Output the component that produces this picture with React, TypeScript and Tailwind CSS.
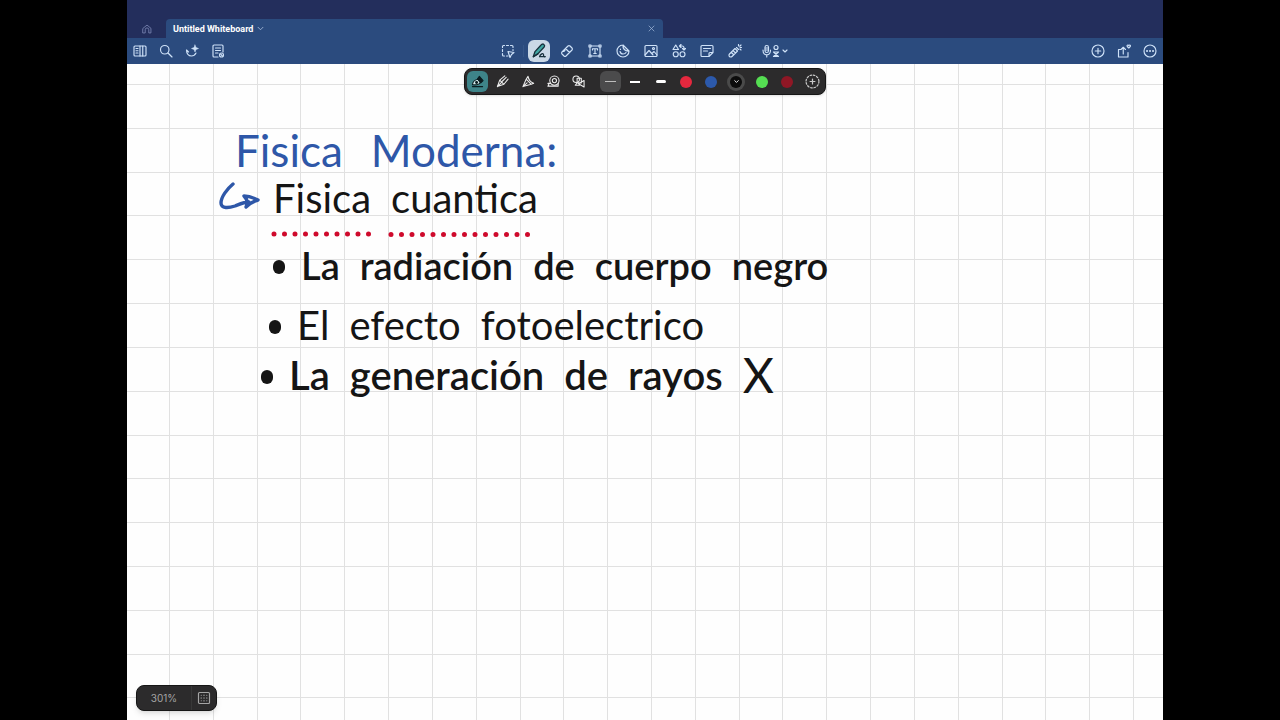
import { useState } from "react";
import type { ReactNode } from "react";
import clsx from "clsx";

const GRID_STEP = 43.82;
const GRID_LINES = Array.from({ length: 80 }, (_, i) => i);

interface IconProps {
  children: ReactNode;
  className?: string;
  viewBox?: string;
}

function Icon({ children, className = "size-[14px]", viewBox = "0 0 28 28" }: IconProps) {
  return (
    <svg
      className={className}
      viewBox={viewBox}
      fill="none"
      stroke="currentColor"
      strokeWidth={2.3}
      strokeLinecap="round"
      strokeLinejoin="round"
      aria-hidden="true"
    >
      {children}
    </svg>
  );
}

const LEFT_TOOLS = [
  {
    label: "Sidebar",
    icon: (
      <>
        <rect x="2" y="4" width="24" height="20" rx="2" />
        <path d="M14 4v20M19.500 4v20M6 9h4M6 13.500h4M6 18h4" />
      </>
    ),
  },
  {
    label: "Search",
    icon: (
      <>
        <circle cx="11.500" cy="11.500" r="8.500" />
        <path d="M18 18l8 8" />
      </>
    ),
  },
  {
    label: "AI ink",
    icon: (
      <>
        <path d="M3 12c0 7 4 12 10 12 4 0 7-2 9-6M3 12l4 4" />
        <path
          d="M20 2l2 5 5 2-5 2-2 5-2-5-5-2 5-2z"
          fill="currentColor"
          strokeWidth={1}
        />
      </>
    ),
  },
  {
    label: "Page settings",
    icon: (
      <>
        <path d="M14 26H6a2 2 0 0 1-2-2V4a2 2 0 0 1 2-2h16a2 2 0 0 1 2 2v12M9 8h10M9 13h10M9 18h5" />
        <circle cx="21" cy="22" r="4" />
        <path d="M19.500 20.500l3 3" />
      </>
    ),
  },
];

const CENTER_TOOLS = [
  {
    label: "Eraser",
    icon: (
      <path d="M4 16L16 4a3 3 0 0 1 4 0l4 4a3 3 0 0 1 0 4L12 24a3 3 0 0 1-4 0l-4-4a3 3 0 0 1 0-4zM11 9l8 8M7.500 15l2.500-2.500" />
    ),
  },
  {
    label: "Text",
    icon: (
      <>
        <path d="M4 6v16M24 6v16M6 4h16M6 24h16M9 12V9.500h10V12M14 9.500V19M11.500 19h5" />
        <path d="M2 2h4v4H2zM22 2h4v4h-4zM2 22h4v4H2zM22 22h4v4h-4z" />
      </>
    ),
  },
  {
    label: "Stickers",
    icon: (
      <path d="M14 2C7 2 2 7.500 2 14s5 12 12 12 12-5.500 12-12L14 2zM14 2c-1 7 4 13 12 12M8 15c1 3.500 3.500 5 6 5s5-1 6-3M9 10v1" />
    ),
  },
  {
    label: "Image",
    icon: (
      <>
        <rect x="2" y="3" width="24" height="22" rx="2" />
        <path d="M2 22l8-9 8 9M16 19l4-4 6 7" />
        <circle cx="19" cy="9" r="2" />
      </>
    ),
  },
  {
    label: "Elements",
    icon: (
      <>
        <path d="M7.500 2L13 11H2zM16 4h4a4 4 0 0 1 4 4v3M18 1l-3 3 3 3M21 9l3 3 3-3" />
        <circle cx="7.500" cy="20.500" r="5" />
        <circle cx="21" cy="20.500" r="5" />
      </>
    ),
  },
  {
    label: "Sticky note",
    icon: (
      <path d="M4 3h20a2 2 0 0 1 2 2v12l-8 8H4a2 2 0 0 1-2-2V5a2 2 0 0 1 2-2zM26 17h-6a2 2 0 0 0-2 2v6M7 9h14M7 14h8" />
    ),
  },
  {
    label: "Laser pointer",
    icon: (
      <>
        <path d="M3 20L14 9l5 5L8 25a3.500 3.500 0 0 1-5 0 3.500 3.500 0 0 1 0-5zM10 13l5 5M8 18l2 2" />
        <path d="M17 7l4 4M21 1v3M26 2l-2.500 2.500M27 7h-3M26 12l-2-2" />
      </>
    ),
  },
];

const RIGHT_TOOLS = [
  {
    label: "Add",
    icon: (
      <>
        <circle cx="14" cy="14" r="12" />
        <path d="M14 8.500v11M8.500 14h11" />
      </>
    ),
  },
  {
    label: "Share",
    icon: (
      <>
        <path d="M7 11H3v15h19v-9M12.500 20V7M8 11l4.500-4.500L17 11" />
        <path d="M20 3.500c1-2 3-2 3.500 0 .5-2 3-2 3.500 0 0 2-2 3-3.500 4.500C22 6.500 20 5.500 20 3.500z" />
      </>
    ),
  },
  {
    label: "More",
    icon: (
      <>
        <circle cx="14" cy="14" r="12" />
        <path d="M8 14h.1M14 14h.1M20 14h.1" strokeWidth={4} />
      </>
    ),
  },
];

const PEN_TOOLS = [
  {
    label: "Fountain pen",
    icon: (
      <>
        <path d="M3 21c1-7 5-11 12-12l5 7c-3 5-8 6-17 5z" fill="#d5eeee" stroke="#0b1c20" />
        <circle cx="12" cy="16" r="2" fill="#0b1c20" stroke="#0b1c20" />
        <path d="M14 8l4-5 8 9-5 5z" fill="#0b1c20" stroke="#0b1c20" />
        <path d="M3 25h22" stroke="#0b1c20" />
      </>
    ),
  },
  {
    label: "Ball pen",
    icon: <path d="M3 25L8 11 19 2M3 25l14-5L26 9M8 11l9 9M3 25l9-9M13 14l9-9" />,
  },
  {
    label: "Brush pen",
    icon: <path d="M2 25L9 9l11 11zM2 25l9-8M9 9l4-6M20 20l5-2M13 3c1 7 5 12 12 15" />,
  },
  {
    label: "Tape",
    icon: (
      <>
        <circle cx="16" cy="12" r="10" />
        <circle cx="16" cy="12" r="4.500" />
        <path d="M24 18v6H2l2-3-2-3h6" />
      </>
    ),
  },
  {
    label: "Shapes",
    icon: (
      <>
        <circle cx="9" cy="9" r="7" />
        <path d="M11 7h9v10h-9zM11 17l-4 5h9M26 12v14l-12-7z" />
      </>
    ),
  },
];

const STROKES = [
  { label: "Thin", bar: "h-px w-[11px] bg-[#bdbdbd]" },
  { label: "Medium", bar: "h-[2px] w-[10px] bg-white" },
  { label: "Thick", bar: "h-[3px] w-[10px] rounded-full bg-white" },
];

const COLORS = [
  { label: "Red", swatch: "bg-[#e5283e]" },
  { label: "Blue", swatch: "bg-[#2c59ab]" },
  { label: "Black", swatch: "bg-[#0c0c0c]" },
  { label: "Green", swatch: "bg-[#55de52]" },
  { label: "Dark red", swatch: "bg-[#8f1725]" },
];

function ToolButton({ label, children }: { label: string; children: ReactNode }) {
  return (
    <button
      type="button"
      aria-label={label}
      className="flex h-6 w-7 items-center justify-center text-[#cfe2f8]"
    >
      {children}
    </button>
  );
}

function TabBar() {
  return (
    <div className="flex h-[38px] items-end bg-[#232e5c]">
      <button
        type="button"
        aria-label="Home"
        className="flex h-[19px] w-[39px] items-center justify-center text-[#7d87b5]"
      >
        <Icon className="size-[10px]">
          <path d="M3 12L14 3l11 9v13h-6v-9a5 5 0 0 0-10 0v9H3z" />
        </Icon>
      </button>
      <div className="flex h-[19px] w-[48%] items-center rounded-t-sm bg-[#2b4b7e] pr-2 pl-[7px]">
        <button
          type="button"
          className="flex items-center gap-1 font-['Roboto',sans-serif] text-[9px] leading-4 font-bold text-white"
        >
          Untitled Whiteboard
          <Icon className="size-[7px] text-[#b5c9e6]">
            <path d="M4 9l10 10L24 9" strokeWidth={3} />
          </Icon>
        </button>
        <button type="button" aria-label="Close tab" className="ml-auto text-[#9db4d6]">
          <Icon className="size-[7px]">
            <path d="M4 4l20 20M24 4L4 24" strokeWidth={3} />
          </Icon>
        </button>
      </div>
    </div>
  );
}

function Toolbar() {
  return (
    <div className="flex h-[26px] items-center bg-[#2b4b7e]">
      <div className="flex flex-1 [&>button]:w-[26px]">
        {LEFT_TOOLS.map((tool) => (
          <ToolButton key={tool.label} label={tool.label}>
            <Icon>{tool.icon}</Icon>
          </ToolButton>
        ))}
      </div>

      <div className="flex items-center">
        <ToolButton label="Lasso">
          <Icon>
            <path d="M3 7V5a2 2 0 0 1 2-2h2M11 3h4M19 3h3a2 2 0 0 1 2 2v2M24 11v2M3 11v4M3 19v3a2 2 0 0 0 2 2h2M11 24h3" />
            <path d="M14 15l12 2-5 4-3 6z" />
          </Icon>
        </ToolButton>
        <div className="mx-px h-3 w-px bg-[#365687]" />
        <button
          type="button"
          aria-label="Pen"
          aria-pressed="true"
          className="mx-[3px] flex size-[22px] items-center justify-center rounded-md bg-[#cad8e6] text-[#17303c]"
        >
          <Icon className="size-4">
            <path d="M4 24l3-9L18 3a3 3 0 0 1 5 4L12 19z" fill="#42a8a5" />
            <path d="M4 24l8-5M15 24c1-4 7-8 7-3 0 3 0 4 3 3M16 24h8" />
          </Icon>
        </button>
        {CENTER_TOOLS.map((tool) => (
          <ToolButton key={tool.label} label={tool.label}>
            <Icon>{tool.icon}</Icon>
          </ToolButton>
        ))}
        <button
          type="button"
          aria-label="Record audio"
          className="ml-1 flex w-11 items-center justify-center text-[#cfe2f8]"
        >
          <Icon className="h-[14px] w-[26px]" viewBox="0 0 52 28">
            <rect x="6" y="3" width="7" height="14" rx="3.500" />
            <path d="M2 12c0 13 15 13 15 0M9.500 22v4M7 8h5M7 12h5" />
            <circle cx="28" cy="7" r="4" />
            <path d="M23 16l10 9M33 16l-10 9M23 16h10M23 25h10" />
            <path d="M42 12l4 4 4-4" />
          </Icon>
        </button>
      </div>

      <div className="flex flex-1 justify-end [&>button]:w-[26px]">
        {RIGHT_TOOLS.map((tool) => (
          <ToolButton key={tool.label} label={tool.label}>
            <Icon>{tool.icon}</Icon>
          </ToolButton>
        ))}
      </div>
    </div>
  );
}

function PenBar() {
  const [pen, setPen] = useState("Fountain pen");
  const [stroke, setStroke] = useState("Thin");
  const [color, setColor] = useState("Black");

  return (
    <div className="absolute top-1 left-1/2 z-10 flex h-[27px] w-[362px] -translate-x-1/2 items-center rounded-lg border border-[#161616] bg-[#2c2b2c] shadow">
      {PEN_TOOLS.map((tool) => (
        <button
          key={tool.label}
          type="button"
          aria-label={tool.label}
          onClick={() => setPen(tool.label)}
          className="flex flex-1 justify-center text-[#ededed]"
        >
          <span
            className={clsx(
              "flex size-[21px] shrink-0 items-center justify-center rounded-md",
              pen === tool.label && "bg-[#3e8489]",
            )}
          >
            <Icon className="size-[13px]">{tool.icon}</Icon>
          </span>
        </button>
      ))}
      <div className="w-[6px]" />
      {STROKES.map((s) => (
        <button
          key={s.label}
          type="button"
          aria-label={s.label}
          onClick={() => setStroke(s.label)}
          className="flex flex-1 justify-center"
        >
          <span
            className={clsx(
              "flex size-[21px] shrink-0 items-center justify-center rounded-md",
              stroke === s.label && "bg-[#4b4b4c]",
            )}
          >
            <span className={s.bar} />
          </span>
        </button>
      ))}
      {COLORS.map((c) => (
        <button
          key={c.label}
          type="button"
          aria-label={c.label}
          onClick={() => setColor(c.label)}
          className="flex flex-1 justify-center text-white"
        >
          <span
            className={clsx(
              "flex size-3 shrink-0 items-center justify-center rounded-full",
              c.swatch,
              color === c.label && "ring-[3px] ring-[#4a4a4a]",
            )}
          >
            {color === c.label && (
              <Icon className="size-[5px]">
                <path d="M4 9l10 10L24 9" strokeWidth={5} />
              </Icon>
            )}
          </span>
        </button>
      ))}
      <button
        type="button"
        aria-label="Add color"
        className="flex flex-1 justify-center text-[#c9c9c9]"
      >
        <Icon className="size-[15px]">
          <circle cx="14" cy="14" r="12" strokeDasharray="3 3.300" />
          <path d="M14 9.500v9M9.500 14h9" />
        </Icon>
      </button>
    </div>
  );
}

function Grid() {
  return (
    <svg className="absolute inset-0 size-full" stroke="#e1e1e1" aria-hidden="true">
      {GRID_LINES.map((i) => {
        const x = Math.round(42 + i * GRID_STEP) + 0.5;
        const y = Math.round(20 + i * GRID_STEP) + 0.5;
        return (
          <g key={i}>
            <line x1={x} y1="0" x2={x} y2="100%" />
            <line x1="0" y1={y} x2="100%" y2={y} />
          </g>
        );
      })}
    </svg>
  );
}

function Bullet() {
  return <span className="mt-1 -mr-1 h-[14px] w-3 shrink-0 rounded-full bg-[#151515]" />;
}

function Notes() {
  return (
    <div className="relative pt-[60px] pl-[92px] font-['Lato',sans-serif] whitespace-nowrap text-[#151515]">
      <h1 className="flex gap-7 pl-4 text-[44px] leading-[52px] text-[#2e57a8]">
        <span>Fisica</span>
        <span>Moderna:</span>
      </h1>
      <h2 className="flex items-center text-[40px] leading-[44px]">
        <svg
          className="mr-3 h-8 w-[42px] shrink-0"
          viewBox="0 0 42 32"
          fill="none"
          stroke="#2e57a8"
          strokeWidth={3.4}
          strokeLinecap="round"
          strokeLinejoin="round"
          aria-hidden="true"
        >
          <path d="M14 2C8 7 2 15 2 21c0 6 8 5 14 3 5-2 9-4 14-4M25 14c5 0 10 2 14 4-4 1-8 3-12 7 2-4 1-8-2-11z" />
        </svg>
        <span>Fisica</span>
        <span className="ml-5">cuantica</span>
      </h2>
      <svg className="ml-[52px] block h-[20px] w-[262px]" viewBox="0 0 262 20" aria-hidden="true">
        <path
          d="M3 14h96M120 14.500h138"
          fill="none"
          stroke="#cf0a2c"
          strokeWidth={5}
          strokeLinecap="round"
          strokeDasharray="0 10.500"
        />
      </svg>
      <ul className="mt-px text-[40px] leading-[48px]">
        <li className="flex items-center gap-5 pl-[54px] text-[38px] leading-[48px] font-semibold">
          <Bullet />
          <span>La</span>
          <span>radiación</span>
          <span>de</span>
          <span>cuerpo</span>
          <span>negro</span>
        </li>
        <li className="mt-3 flex items-center gap-5 pl-[50px]">
          <Bullet />
          <span>El</span>
          <span>efecto</span>
          <span>fotoelectrico</span>
        </li>
        <li className="mt-[2px] flex items-center gap-5 pl-[42px] font-semibold">
          <Bullet />
          <span>La</span>
          <span>generación</span>
          <span>de</span>
          <span>rayos</span>
          <span className="text-[48px] font-normal">X</span>
        </li>
      </ul>
    </div>
  );
}

export default function App() {
  return (
    <div className="flex min-h-screen flex-col bg-black pr-[117px] pl-[127px] font-['Inter',sans-serif]">
      <header>
        <TabBar />
        <Toolbar />
      </header>
      <main className="relative flex flex-1 flex-col overflow-hidden bg-[#fefefe]">
        <Grid />
        <PenBar />
        <Notes />
        <div className="relative mt-auto mb-[9px] ml-[9px] flex h-[26px] w-[81px] items-center rounded-lg border border-[#161616] bg-[#2c2b2c] text-[#a5a5a5] shadow-md">
          <button type="button" className="h-full flex-1 border-r border-[#383838] text-[10px]">
            301%
          </button>
          <button
            type="button"
            aria-label="Fit to grid"
            className="flex h-full w-6 items-center justify-center"
          >
            <Icon className="size-[14px]">
              <rect x="3" y="3" width="22" height="22" rx="2" />
              <path d="M14 8v1M14 13.500v1M14 19v1M8 14h1M19 14h1M8.500 8.500h.1M19.500 8.500h.1M8.500 19.500h.1M19.500 19.500h.1" />
            </Icon>
          </button>
        </div>
      </main>
    </div>
  );
}
